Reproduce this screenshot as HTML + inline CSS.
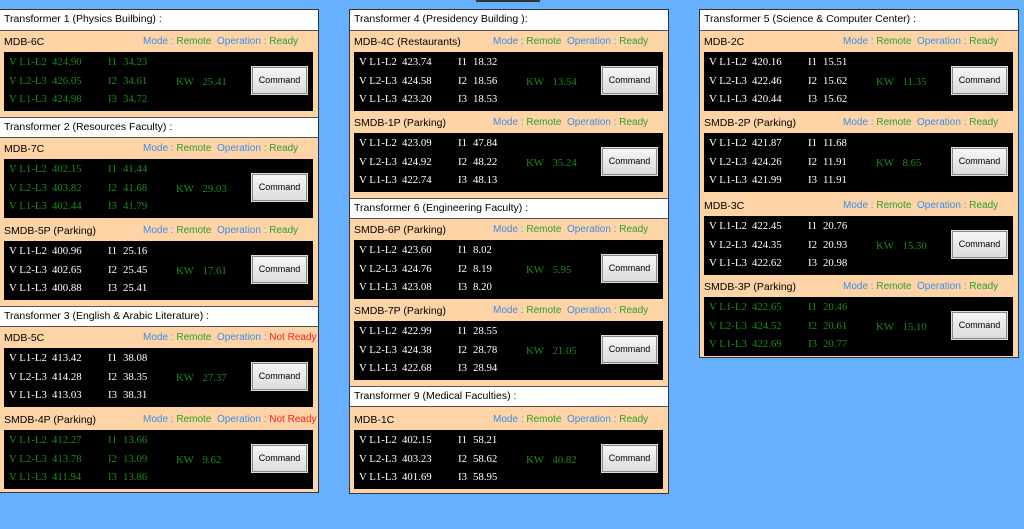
<!DOCTYPE html>
<html><head><meta charset="utf-8"><style>
body{margin:0;width:1024px;height:529px;background:#66b0ff;position:relative;overflow:hidden;font-family:"Liberation Sans",sans-serif;}
.p{position:absolute;background:#fed3a6;border:1px solid #333;box-sizing:border-box;}
.h{position:absolute;left:0;right:0;height:21px;background:#fff;border-top:1px solid #555;border-bottom:1px solid #555;box-sizing:border-box;font-size:10.5px;line-height:19px;padding-left:4px;color:#000;}
.h.f{border-top:none}
.s{position:absolute;left:0;right:0;height:77px;}
.t{position:absolute;left:4px;top:2px;font-size:10.5px;color:#000;}
.m{position:absolute;left:143px;top:2px;font-size:10px;color:#3a8ee8;white-space:nowrap}
.o{position:absolute;left:217px;top:2px;font-size:10px;color:#3a8ee8;white-space:nowrap}
.g{color:#2ba02b}.r{color:#ff2020}
.b{position:absolute;left:4px;top:18px;width:309px;height:59px;background:#000;font-family:"Liberation Serif",serif;font-size:10.8px;}
.b span{position:absolute;white-space:nowrap;margin-top:2px}
.w span{color:#fff}.k span{color:#1a8c1a}
.b span.kw{color:#1a8c1a;word-spacing:6px}
.btn{position:absolute;left:248px;top:15px;width:55px;height:27px;box-sizing:border-box;border:1px solid #888;outline:1px solid #ddd;background:linear-gradient(#f6f6f6,#dcdcdc);font-family:"Liberation Sans",sans-serif;font-size:9px;color:#000;text-align:center;line-height:25px;}
</style></head><body>
<div style="position:absolute;left:476px;top:0;width:64px;height:2px;background:#333"></div>

<div class="p" style="left:-1px;top:9px;width:320px;height:484px">
<div class="h f" style="top:0">Transformer 1 (Physics Builbing) :</div>
<div class="s" style="top:24px"><div class="t">MDB-6C</div><div class="m">Mode : <span class="g">Remote</span></div><div class="o">Operation : <span class="g">Ready</span></div>
<div class="b k"><span style="left:5px;top:2px">V L1-L2</span><span style="left:48px;top:2px">424.90</span><span style="left:104px;top:2px">I1</span><span style="left:119px;top:2px">34.23</span>
<span style="left:5px;top:21px">V L2-L3</span><span style="left:48px;top:21px">426.05</span><span style="left:104px;top:21px">I2</span><span style="left:119px;top:21px">34.61</span>
<span style="left:5px;top:39px">V L1-L3</span><span style="left:48px;top:39px">424.98</span><span style="left:104px;top:39px">I3</span><span style="left:119px;top:39px">34.72</span>
<span class="kw" style="left:172px;top:22px">KW 25.41</span><div class="btn">Command</div></div></div>
<div class="h" style="top:107px">Transformer 2 (Resources Faculty) :</div>
<div class="s" style="top:131px"><div class="t">MDB-7C</div><div class="m">Mode : <span class="g">Remote</span></div><div class="o">Operation : <span class="g">Ready</span></div>
<div class="b k"><span style="left:5px;top:2px">V L1-L2</span><span style="left:48px;top:2px">402.15</span><span style="left:104px;top:2px">I1</span><span style="left:119px;top:2px">41.44</span>
<span style="left:5px;top:21px">V L2-L3</span><span style="left:48px;top:21px">403.82</span><span style="left:104px;top:21px">I2</span><span style="left:119px;top:21px">41.68</span>
<span style="left:5px;top:39px">V L1-L3</span><span style="left:48px;top:39px">402.44</span><span style="left:104px;top:39px">I3</span><span style="left:119px;top:39px">41.79</span>
<span class="kw" style="left:172px;top:22px">KW 29.03</span><div class="btn">Command</div></div></div>
<div class="s" style="top:213px"><div class="t">SMDB-5P (Parking)</div><div class="m">Mode : <span class="g">Remote</span></div><div class="o">Operation : <span class="g">Ready</span></div>
<div class="b w"><span style="left:5px;top:2px">V L1-L2</span><span style="left:48px;top:2px">400.96</span><span style="left:104px;top:2px">I1</span><span style="left:119px;top:2px">25.16</span>
<span style="left:5px;top:21px">V L2-L3</span><span style="left:48px;top:21px">402.65</span><span style="left:104px;top:21px">I2</span><span style="left:119px;top:21px">25.45</span>
<span style="left:5px;top:39px">V L1-L3</span><span style="left:48px;top:39px">400.88</span><span style="left:104px;top:39px">I3</span><span style="left:119px;top:39px">25.41</span>
<span class="kw" style="left:172px;top:22px">KW 17.61</span><div class="btn">Command</div></div></div>
<div class="h" style="top:296px">Transformer 3 (English &amp; Arabic Literature) :</div>
<div class="s" style="top:320px"><div class="t">MDB-5C</div><div class="m">Mode : <span class="g">Remote</span></div><div class="o">Operation : <span class="r">Not Ready</span></div>
<div class="b w"><span style="left:5px;top:2px">V L1-L2</span><span style="left:48px;top:2px">413.42</span><span style="left:104px;top:2px">I1</span><span style="left:119px;top:2px">38.08</span>
<span style="left:5px;top:21px">V L2-L3</span><span style="left:48px;top:21px">414.28</span><span style="left:104px;top:21px">I2</span><span style="left:119px;top:21px">38.35</span>
<span style="left:5px;top:39px">V L1-L3</span><span style="left:48px;top:39px">413.03</span><span style="left:104px;top:39px">I3</span><span style="left:119px;top:39px">38.31</span>
<span class="kw" style="left:172px;top:22px">KW 27.37</span><div class="btn">Command</div></div></div>
<div class="s" style="top:402px"><div class="t">SMDB-4P (Parking)</div><div class="m">Mode : <span class="g">Remote</span></div><div class="o">Operation : <span class="r">Not Ready</span></div>
<div class="b k"><span style="left:5px;top:2px">V L1-L2</span><span style="left:48px;top:2px">412.27</span><span style="left:104px;top:2px">I1</span><span style="left:119px;top:2px">13.66</span>
<span style="left:5px;top:21px">V L2-L3</span><span style="left:48px;top:21px">413.78</span><span style="left:104px;top:21px">I2</span><span style="left:119px;top:21px">13.09</span>
<span style="left:5px;top:39px">V L1-L3</span><span style="left:48px;top:39px">411.94</span><span style="left:104px;top:39px">I3</span><span style="left:119px;top:39px">13.86</span>
<span class="kw" style="left:172px;top:22px">KW 9.62</span><div class="btn">Command</div></div></div>
</div>

<div class="p" style="left:349px;top:9px;width:320px;height:485px">
<div class="h f" style="top:0">Transformer 4 (Presidency Building ):</div>
<div class="s" style="top:24px"><div class="t">MDB-4C (Restaurants)</div><div class="m">Mode : <span class="g">Remote</span></div><div class="o">Operation : <span class="g">Ready</span></div>
<div class="b w"><span style="left:5px;top:2px">V L1-L2</span><span style="left:48px;top:2px">423.74</span><span style="left:104px;top:2px">I1</span><span style="left:119px;top:2px">18.32</span>
<span style="left:5px;top:21px">V L2-L3</span><span style="left:48px;top:21px">424.58</span><span style="left:104px;top:21px">I2</span><span style="left:119px;top:21px">18.56</span>
<span style="left:5px;top:39px">V L1-L3</span><span style="left:48px;top:39px">423.20</span><span style="left:104px;top:39px">I3</span><span style="left:119px;top:39px">18.53</span>
<span class="kw" style="left:172px;top:22px">KW 13.54</span><div class="btn">Command</div></div></div>
<div class="s" style="top:105px"><div class="t">SMDB-1P (Parking)</div><div class="m">Mode : <span class="g">Remote</span></div><div class="o">Operation : <span class="g">Ready</span></div>
<div class="b w"><span style="left:5px;top:2px">V L1-L2</span><span style="left:48px;top:2px">423.09</span><span style="left:104px;top:2px">I1</span><span style="left:119px;top:2px">47.84</span>
<span style="left:5px;top:21px">V L2-L3</span><span style="left:48px;top:21px">424.92</span><span style="left:104px;top:21px">I2</span><span style="left:119px;top:21px">48.22</span>
<span style="left:5px;top:39px">V L1-L3</span><span style="left:48px;top:39px">422.74</span><span style="left:104px;top:39px">I3</span><span style="left:119px;top:39px">48.13</span>
<span class="kw" style="left:172px;top:22px">KW 35.24</span><div class="btn">Command</div></div></div>
<div class="h" style="top:188px">Transformer 6 (Engineering Faculty) :</div>
<div class="s" style="top:212px"><div class="t">SMDB-6P (Parking)</div><div class="m">Mode : <span class="g">Remote</span></div><div class="o">Operation : <span class="g">Ready</span></div>
<div class="b w"><span style="left:5px;top:2px">V L1-L2</span><span style="left:48px;top:2px">423.60</span><span style="left:104px;top:2px">I1</span><span style="left:119px;top:2px">8.02</span>
<span style="left:5px;top:21px">V L2-L3</span><span style="left:48px;top:21px">424.76</span><span style="left:104px;top:21px">I2</span><span style="left:119px;top:21px">8.19</span>
<span style="left:5px;top:39px">V L1-L3</span><span style="left:48px;top:39px">423.08</span><span style="left:104px;top:39px">I3</span><span style="left:119px;top:39px">8.20</span>
<span class="kw" style="left:172px;top:22px">KW 5.95</span><div class="btn">Command</div></div></div>
<div class="s" style="top:293px"><div class="t">SMDB-7P (Parking)</div><div class="m">Mode : <span class="g">Remote</span></div><div class="o">Operation : <span class="g">Ready</span></div>
<div class="b w"><span style="left:5px;top:2px">V L1-L2</span><span style="left:48px;top:2px">422.99</span><span style="left:104px;top:2px">I1</span><span style="left:119px;top:2px">28.55</span>
<span style="left:5px;top:21px">V L2-L3</span><span style="left:48px;top:21px">424.38</span><span style="left:104px;top:21px">I2</span><span style="left:119px;top:21px">28.78</span>
<span style="left:5px;top:39px">V L1-L3</span><span style="left:48px;top:39px">422.68</span><span style="left:104px;top:39px">I3</span><span style="left:119px;top:39px">28.94</span>
<span class="kw" style="left:172px;top:22px">KW 21.05</span><div class="btn">Command</div></div></div>
<div class="h" style="top:376px">Transformer 9 (Medical Faculties) :</div>
<div class="s" style="top:402px"><div class="t">MDB-1C</div><div class="m">Mode : <span class="g">Remote</span></div><div class="o">Operation : <span class="g">Ready</span></div>
<div class="b w"><span style="left:5px;top:2px">V L1-L2</span><span style="left:48px;top:2px">402.15</span><span style="left:104px;top:2px">I1</span><span style="left:119px;top:2px">58.21</span>
<span style="left:5px;top:21px">V L2-L3</span><span style="left:48px;top:21px">403.23</span><span style="left:104px;top:21px">I2</span><span style="left:119px;top:21px">58.62</span>
<span style="left:5px;top:39px">V L1-L3</span><span style="left:48px;top:39px">401.69</span><span style="left:104px;top:39px">I3</span><span style="left:119px;top:39px">58.95</span>
<span class="kw" style="left:172px;top:22px">KW 40.82</span><div class="btn">Command</div></div></div>
</div>

<div class="p" style="left:699px;top:9px;width:320px;height:349px">
<div class="h f" style="top:0">Transformer 5 (Science &amp; Computer Center) :</div>
<div class="s" style="top:24px"><div class="t">MDB-2C</div><div class="m">Mode : <span class="g">Remote</span></div><div class="o">Operation : <span class="g">Ready</span></div>
<div class="b w"><span style="left:5px;top:2px">V L1-L2</span><span style="left:48px;top:2px">420.16</span><span style="left:104px;top:2px">I1</span><span style="left:119px;top:2px">15.51</span>
<span style="left:5px;top:21px">V L2-L3</span><span style="left:48px;top:21px">422.46</span><span style="left:104px;top:21px">I2</span><span style="left:119px;top:21px">15.62</span>
<span style="left:5px;top:39px">V L1-L3</span><span style="left:48px;top:39px">420.44</span><span style="left:104px;top:39px">I3</span><span style="left:119px;top:39px">15.62</span>
<span class="kw" style="left:172px;top:22px">KW 11.35</span><div class="btn">Command</div></div></div>
<div class="s" style="top:105px"><div class="t">SMDB-2P (Parking)</div><div class="m">Mode : <span class="g">Remote</span></div><div class="o">Operation : <span class="g">Ready</span></div>
<div class="b w"><span style="left:5px;top:2px">V L1-L2</span><span style="left:48px;top:2px">421.87</span><span style="left:104px;top:2px">I1</span><span style="left:119px;top:2px">11.68</span>
<span style="left:5px;top:21px">V L2-L3</span><span style="left:48px;top:21px">424.26</span><span style="left:104px;top:21px">I2</span><span style="left:119px;top:21px">11.91</span>
<span style="left:5px;top:39px">V L1-L3</span><span style="left:48px;top:39px">421.99</span><span style="left:104px;top:39px">I3</span><span style="left:119px;top:39px">11.91</span>
<span class="kw" style="left:172px;top:22px">KW 8.65</span><div class="btn">Command</div></div></div>
<div class="s" style="top:188px"><div class="t">MDB-3C</div><div class="m">Mode : <span class="g">Remote</span></div><div class="o">Operation : <span class="g">Ready</span></div>
<div class="b w"><span style="left:5px;top:2px">V L1-L2</span><span style="left:48px;top:2px">422.45</span><span style="left:104px;top:2px">I1</span><span style="left:119px;top:2px">20.76</span>
<span style="left:5px;top:21px">V L2-L3</span><span style="left:48px;top:21px">424.35</span><span style="left:104px;top:21px">I2</span><span style="left:119px;top:21px">20.93</span>
<span style="left:5px;top:39px">V L1-L3</span><span style="left:48px;top:39px">422.62</span><span style="left:104px;top:39px">I3</span><span style="left:119px;top:39px">20.98</span>
<span class="kw" style="left:172px;top:22px">KW 15.30</span><div class="btn">Command</div></div></div>
<div class="s" style="top:269px"><div class="t">SMDB-3P (Parking)</div><div class="m">Mode : <span class="g">Remote</span></div><div class="o">Operation : <span class="g">Ready</span></div>
<div class="b k"><span style="left:5px;top:2px">V L1-L2</span><span style="left:48px;top:2px">422.65</span><span style="left:104px;top:2px">I1</span><span style="left:119px;top:2px">20.46</span>
<span style="left:5px;top:21px">V L2-L3</span><span style="left:48px;top:21px">424.52</span><span style="left:104px;top:21px">I2</span><span style="left:119px;top:21px">20.61</span>
<span style="left:5px;top:39px">V L1-L3</span><span style="left:48px;top:39px">422.69</span><span style="left:104px;top:39px">I3</span><span style="left:119px;top:39px">20.77</span>
<span class="kw" style="left:172px;top:22px">KW 15.10</span><div class="btn">Command</div></div></div>
</div>
</body></html>
